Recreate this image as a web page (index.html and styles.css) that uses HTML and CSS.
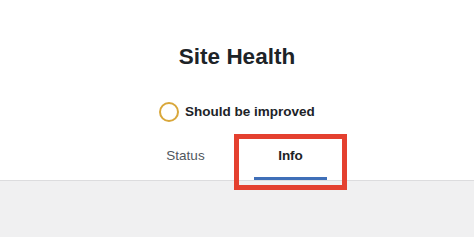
FILE: index.html
```html
<!DOCTYPE html>
<html lang="en">
<head>
<meta charset="utf-8">
<title>Site Health</title>
<link rel="stylesheet" href="styles.css">
</head>
<body>
<div class="page">
  <header class="header">
    <h1 class="title">Site Health</h1>
    <div class="status">
      <span class="status-ring"></span>
      <span class="status-label">Should be improved</span>
    </div>
    <nav class="tabs">
      <a class="tab">Status</a>
      <a class="tab tab-active">Info</a>
    </nav>
  </header>
  <main class="body-area"></main>
  <div class="highlight"></div>
</div>
</body>
</html>
```
FILE: styles.css
```css
html, body {
  margin: 0;
  padding: 0;
  background: #f0f0f1;
}

.page {
  position: relative;
  width: 474px;
  height: 237px;
  display: flex;
  flex-direction: column;
  font-family: "Liberation Sans", Arial, sans-serif;
  color: #1d2327;
  overflow: hidden;
}

.header {
  height: 180px;
  background: #ffffff;
  border-bottom: 1px solid #dcdcde;
  display: flex;
  flex-direction: column;
  align-items: center;
}

.title {
  margin: 43px 0 0;
  font-size: 22.5px;
  line-height: 28px;
  font-weight: 700;
  color: #1d2327;
}

.status {
  margin-top: 31px;
  display: flex;
  align-items: center;
  gap: 6px;
  height: 20px;
}

.status-ring {
  width: 20px;
  height: 20px;
  box-sizing: border-box;
  border: 2px solid #d9a73a;
  border-radius: 50%;
}

.status-label {
  font-size: 13.5px;
  line-height: 20px;
  font-weight: 700;
  color: #1d2327;
}

.tabs {
  margin-top: auto;
  margin-left: 2px;
  display: grid;
  grid-template-columns: 73px 73px;
  column-gap: 32px;
}

.tab {
  display: block;
  padding: 8px 0 14px;
  font-size: 13.5px;
  line-height: 20px;
  text-align: center;
  color: #50575e;
  text-decoration: none;
}

.tab-active {
  font-weight: 700;
  color: #1d2327;
  box-shadow: inset 0 -3px #3f6fb8;
}

.body-area {
  flex: 1;
  background: #f0f0f1;
}

.highlight {
  position: absolute;
  left: 234px;
  top: 134px;
  width: 113px;
  height: 56px;
  box-sizing: border-box;
  border: 5px solid #e4402f;
}
```
